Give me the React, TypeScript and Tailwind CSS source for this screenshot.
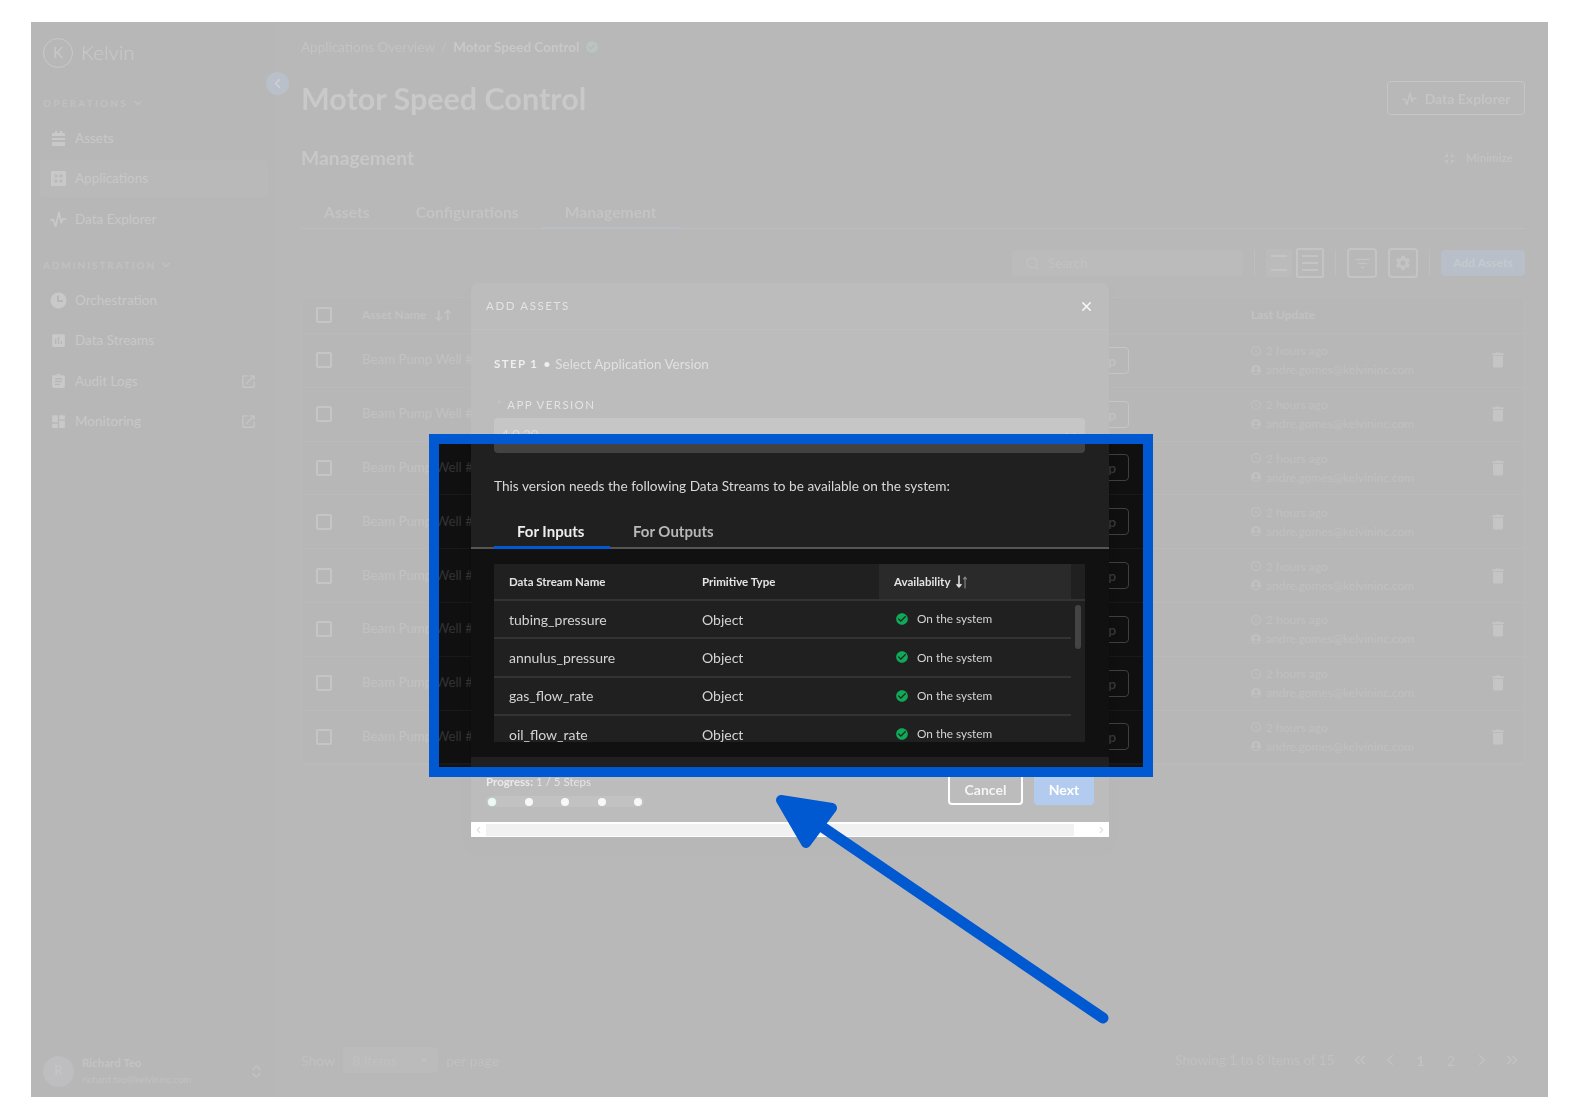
import React from "react";
import { ChevronDown, ChevronLeft, ChevronRight, ChevronsLeft, ChevronsRight, ChevronsUpDown, Search, X } from "lucide-react";
import { MdAssignment, MdCheckCircle, MdDashboard, MdDelete, MdFilterList, MdFullscreenExit, MdInsertChart, MdOpenInNew, MdSettings, MdSchedule, MdAccountCircle, MdVerified, MdArrowDropDown } from "react-icons/md";

function AssetsIcon() {
  return (
    <svg width="17" height="17" viewBox="0 0 17 17" fill="currentColor">
      <path d="M2 6V4a1 1 0 0 1 1-1h2V1h2v2h3V1h2v2h2a1 1 0 0 1 1 1v2zM2 8h13v2H2zM2 12h13v3a1 1 0 0 1-1 1H3a1 1 0 0 1-1-1z" />
    </svg>
  );
}
function AppsIcon() {
  return (
    <svg width="17" height="17" viewBox="0 0 17 17">
      <path fill="currentColor" fillRule="evenodd" d="M2 1h13a1 1 0 0 1 1 1v13a1 1 0 0 1-1 1H2a1 1 0 0 1-1-1V2a1 1 0 0 1 1-1zm2.500 3.500v3h3v-3zm5 0v3h3v-3zm-5 5v3h3v-3zm5 0v3h3v-3z" />
    </svg>
  );
}
function OrchIcon() {
  return (
    <svg width="17" height="17" viewBox="0 0 17 17">
      <path fill="currentColor" fillRule="evenodd" d="M8.500 0.500a8 8 0 1 1 0 16a8 8 0 0 1 0-16zM7 3.500V10h6V8H9V3.500z" />
    </svg>
  );
}
function PulseIcon({ size = 18 }: { size?: number }) {
  return (
    <svg width={size} height={size} viewBox="0 0 18 18" fill="none" stroke="currentColor" strokeWidth="1.800" strokeLinejoin="round" strokeLinecap="round">
      <path d="M1 10h2.500L6 16.500 9.500 2l2.500 11 1.500-4H17" />
    </svg>
  );
}
function SortIcon() {
  return (
    <svg width="14" height="14" viewBox="0 0 14 14" fill="none" strokeLinecap="round" strokeLinejoin="round">
      <path d="M4 1v11M2 9.500 4 12l2-2.500" stroke="#dedede" strokeWidth="1.600" />
      <path d="M10 13V2M8.500 4 10 2l1.500 2" stroke="#8a8a8a" strokeWidth="1.100" />
    </svg>
  );
}

const navTop = [
  { label: "Assets", icon: <AssetsIcon /> },
  { label: "Applications", icon: <AppsIcon />, active: true },
  { label: "Data Explorer", icon: <PulseIcon /> },
];
const navBottom = [
  { label: "Orchestration", icon: <OrchIcon /> },
  { label: "Data Streams", icon: <MdInsertChart size={19} /> },
  { label: "Audit Logs", icon: <MdAssignment size={19} />, ext: true },
  { label: "Monitoring", icon: <MdDashboard size={19} />, ext: true },
];

function NavItem({ item }: { item: { label: string; icon: React.ReactNode; active?: boolean; ext?: boolean } }) {
  return (
    <div className={`flex h-[37px] items-center gap-2 rounded pl-[10px] pr-[11px] text-[13.500px] text-[#474747] ${item.active ? "bg-[#161616]" : ""}`}>
      <span className="flex w-[17px] items-center justify-center text-[#4a4a4a]">{item.icon}</span>
      <span className="flex-1">{item.label}</span>
      {item.ext && <MdOpenInNew size={17} className="text-[#3d3d3d]" />}
    </div>
  );
}

function Sidebar() {
  return (
    <aside className="relative flex h-full w-[247px] shrink-0 flex-col border-r border-[#141414] bg-[#0f0f0f] px-[9px] pt-[15px]">
      <div className="ml-[3px] flex h-[31px] items-center gap-2">
        <div className="flex h-[30px] w-[30px] items-center justify-center rounded-full border border-[#4a4a4a] text-[15px] text-[#4a4a4a]">K</div>
        <span className="text-[20.500px] font-light text-[#505050]">Kelvin</span>
      </div>
      <div className="mt-[28px] ml-[3px] flex h-[14px] items-center gap-1 text-[10px] font-bold tracking-[0.22em] text-[#303030]">
        OPERATIONS <ChevronDown size={12} strokeWidth={3} />
      </div>
      <div className="mt-[9.5px] flex flex-col gap-[3.500px]">
        {navTop.map((n) => <NavItem key={n.label} item={n} />)}
      </div>
      <div className="mt-[20.5px] ml-[3px] flex h-[14px] items-center gap-1 text-[10px] font-bold tracking-[0.19em] text-[#303030]">
        ADMINISTRATION <ChevronDown size={12} strokeWidth={3} />
      </div>
      <div className="mt-[9.5px] flex flex-col gap-[3.500px]">
        {navBottom.map((n) => <NavItem key={n.label} item={n} />)}
      </div>
      <div className="mt-auto mb-[9px] ml-[3px] flex items-center gap-2">
        <div className="flex h-[31px] w-[31px] items-center justify-center rounded-full bg-[#26222c] text-[13px] font-bold text-[#3c3c3c]">R</div>
        <div className="flex-1">
          <div className="text-[11.500px] font-bold leading-[18px] text-[#383838]">Richard Teo</div>
          <div className="text-[9.500px] leading-[16px] text-[#333333]">richard.teo@kelvininc.com</div>
        </div>
        <ChevronsUpDown size={17} className="mr-[3px] text-[#333333]" />
      </div>
      <div className="absolute top-[50px] right-[-12px] flex h-[23px] w-[23px] items-center justify-center rounded-full bg-[#152c4c] text-[#4a5a70]">
        <ChevronLeft size={15} strokeWidth={3} />
      </div>
    </aside>
  );
}

function AssetRow() {
  return (
    <div className="flex h-[53.800px] items-center border-b border-[#191919] pl-[14px] pr-[16px]">
      <div className="h-[16px] w-[16px] rounded-[2px] border-2 border-[#3d3d3d]" />
      <div className="ml-[30px] w-[500px] text-[13.300px] text-[#333333]">Beam Pump Well #1</div>
      <div className="flex flex-1 justify-end pr-[121px]">
        <div className="flex h-[27px] w-[54px] items-center justify-center rounded border border-[#3f3f3f] text-[14px] font-semibold text-[#383838]">Stop</div>
      </div>
      <div className="w-[238px] text-[12px] leading-[19px] text-[#2d2d2d]">
        <div className="flex items-center gap-[4px]"><MdSchedule size={12} />2 hours ago</div>
        <div className="flex items-center gap-[4px]"><MdAccountCircle size={12} />andre.gomes@kelvininc.com</div>
      </div>
      <MdDelete size={20} className="text-[#3c3c3c]" />
    </div>
  );
}

function Main() {
  return (
    <main className="flex h-full flex-1 flex-col px-[23px] pt-[15px] pb-[24px]">
      <div className="flex h-[20px] items-center gap-[6px] text-[13.500px] text-[#3a3a3a]">
        <span>Applications Overview</span><span>/</span>
        <span className="font-bold text-[#4a4a4a]">Motor Speed Control</span>
        <MdVerified size={14} className="text-[#1a3a2c]" />
      </div>
      <div className="mt-[21px] flex h-[40px] items-center justify-between">
        <h1 className="mt-[2px] text-[30.500px] font-bold text-[#4c4c4c]">Motor Speed Control</h1>
        <div className="flex h-[34px] w-[138px] items-center justify-center gap-2 rounded border border-[#424242] text-[14px] font-bold text-[#3d3d3d]">
          <PulseIcon size={15} /> Data Explorer
        </div>
      </div>
      <div className="mt-[28px] flex h-[24px] items-center justify-between">
        <h2 className="text-[19.300px] font-bold text-[#474747]">Management</h2>
        <div className="mr-[12px] flex items-center gap-2 text-[11.500px] font-bold text-[#363636]">
          <MdFullscreenExit size={17} /> Minimize
        </div>
      </div>
      <div className="mt-[27px] flex h-[32px] border-b border-[#222222] pt-[4px] text-[15.700px] font-bold text-[#3a3a3a]">
        <span className="px-[23px]">Assets</span>
        <span className="px-[23px]">Configurations</span>
        <span className="h-[28px] border-b-2 border-[#162a48] px-[23px]">Management</span>
      </div>
      <div className="mt-[21px] flex h-[26px] items-center justify-end">
        <div className="flex h-[26px] w-[231px] items-center gap-2 rounded bg-[#1c1c1c] pl-[13px] text-[13.500px] text-[#333333]">
          <Search size={15} /> Search
        </div>
        <div className="mx-[11px] h-[26px] w-px bg-[#262626]" />
        <div className="flex items-center gap-[4px] text-[#3b3b3b]">
          <div className="flex h-[28px] w-[26px] flex-col items-center justify-between rounded-[2px] bg-[#1c1c1c] px-[5px] py-[6px]">
            <div className="h-[2px] w-full bg-current" /><div className="h-[2px] w-full bg-current" />
          </div>
          <div className="flex h-[30px] w-[28px] flex-col items-center justify-between rounded-[2px] border-2 border-[#3b3b3b] px-[4px] py-[5px]">
            <div className="h-[2px] w-full bg-current" /><div className="h-[2px] w-full bg-current" /><div className="h-[2px] w-full bg-current" />
          </div>
        </div>
        <div className="mx-[11px] h-[26px] w-px bg-[#262626]" />
        <div className="flex h-[30px] w-[30px] items-center justify-center rounded border-2 border-[#3b3b3b] text-[#3b3b3b]"><MdFilterList size={19} /></div>
        <div className="ml-[11px] flex h-[30px] w-[30px] items-center justify-center rounded border-2 border-[#3b3b3b] text-[#3b3b3b]"><MdSettings size={18} /></div>
        <div className="mx-[11px] h-[26px] w-px bg-[#262626]" />
        <div className="flex h-[26px] w-[84px] items-center justify-center rounded bg-[#152a48] text-[12px] font-bold text-[#3e4c60]">Add Assets</div>
      </div>
      <div className="mt-[21px] rounded border border-[#191919] bg-[#101010]">
        <div className="flex h-[36px] items-center border-b border-[#191919] pb-[2px] pl-[14px] text-[12px] font-bold text-[#333333]">
          <div className="h-[16px] w-[16px] rounded-[2px] border-2 border-[#3d3d3d]" />
          <span className="ml-[30px]">Asset Name</span>
          <span className="ml-2 text-[#3d3d3d]">↓↑</span>
          <span className="ml-auto w-[273px]">Last Update</span>
        </div>
        {Array.from({ length: 8 }).map((_, i) => <AssetRow key={i} />)}
      </div>
      <div className="mt-auto flex h-[26px] items-center text-[14px] text-[#303030]">
        <span>Show</span>
        <div className="mx-[8px] flex h-[26px] w-[95px] items-center justify-between rounded bg-[#1c1c1c] pl-[9px] pr-[5px]">8 items <MdArrowDropDown size={18} /></div>
        <span>per page</span>
        <span className="ml-auto text-[13.500px]">Showing 1 to 8 items of 15</span>
        <div className="ml-[16px] mr-[4px] flex items-center gap-[12.500px] text-[#363636]">
          <ChevronsLeft size={18} /><ChevronLeft size={18} />
          <span className="w-[18px] text-center font-bold">1</span>
          <span className="w-[18px] text-center">2</span>
          <ChevronRight size={18} /><ChevronsRight size={18} />
        </div>
      </div>
    </main>
  );
}

const streams = ["tubing_pressure", "annulus_pressure", "gas_flow_rate", "oil_flow_rate"];

function Modal() {
  return (
    <div className="absolute top-[261px] left-[440px] flex h-[554px] w-[638px] flex-col overflow-hidden rounded-t-lg bg-[#202020] shadow-lg">
      <div className="flex h-[47px] shrink-0 items-center justify-between border-b border-[#2b2b2b] pr-[16px] pl-[15px] text-[11.500px] tracking-[0.14em] text-[#a5a5a5]">
        ADD ASSETS
        <X size={15} strokeWidth={2.5} className="mr-[-1px] text-[#e6e6e6]" />
      </div>
      <div className="flex flex-col pr-[24px] pl-[23px]">
        <div className="mt-[24px] flex h-[20px] items-center gap-[4.500px] text-[13.500px] text-[#9c9c9c]">
          <span className="text-[11.500px] font-bold tracking-[0.12em] text-[#c8c8c8]">STEP 1</span>
          <span className="text-[#c8c8c8]">•</span>
          <span>Select Application Version</span>
        </div>
        <div className="mt-[24px] flex h-[14px] items-center gap-[4px] text-[11.500px] tracking-[0.12em] text-[#a5a5a5]">
          <span className="ml-[3px] text-[#6a3030]">*</span>APP VERSION
        </div>
        <div className="mt-[6px] flex h-[35px] items-start justify-between rounded bg-[#424242] px-[7px] pt-[7px] text-[13.500px] text-[#8a8a8a]">
          4.0.20 <ChevronDown size={15} className="mt-[3px]" />
        </div>
        <p className="mt-[23px] h-[20px] text-[13.650px] leading-[20px] text-[#d8d8d8]">This version needs the following Data Streams to be available on the system:</p>
      </div>
      <div className="mt-[17px] flex h-[36px] shrink-0 items-start border-b-2 border-[#565656] pl-[23px] text-[15px] font-bold">
        <div className="h-[36px] w-[116px] border-b-[3px] border-[#0059d0] pt-[7px] pl-[23px] text-[#ededed]">For Inputs</div>
        <div className="pt-[7px] pl-[23px] text-[#b8b8b8]">For Outputs</div>
      </div>
      <div className="flex h-[208px] shrink-0 flex-col bg-[#111111] pt-[15px] pr-[24px] pb-[15px] pl-[23px]">
        <div className="relative h-[178px] overflow-hidden bg-[#202020]">
          <div className="flex h-[37px] border-b-2 border-[#333333] pt-[1px] text-[11.500px] font-bold text-[#e4e4e4]">
            <div className="flex w-[208px] items-center pl-[15px]">Data Stream Name</div>
            <div className="flex w-[177px] items-center">Primitive Type</div>
            <div className="mt-[-1px] flex w-[192px] items-center gap-[5px] bg-[#2a2a2a] pl-[15px]">Availability <SortIcon /></div>
          </div>
          {streams.map((s) => (
            <div key={s} className="mr-[14px] flex h-[38.300px] items-center border-b-2 border-[#333333] text-[14px] text-[#d4d4d4]">
              <div className="w-[208px] pl-[15px]">{s}</div>
              <div className="w-[177px]">Object</div>
              <div className="flex items-center gap-[8px] pl-[16px] text-[11.800px]">
                <span className="relative flex h-[14px] w-[14px] items-center justify-center">
                  <MdCheckCircle size={16} className="text-[#0fa958]" />
                </span>
                On the system
              </div>
            </div>
          ))}
          <div className="absolute top-[41px] right-[4px] h-[44px] w-[6px] rounded-full bg-[#444444]" />
        </div>
      </div>
      <div className="flex h-[65px] shrink-0 justify-between pt-[16px] pr-[15px] pl-[15px]">
        <div>
          <div className="mt-[1px] text-[11.500px] leading-[16px] text-[#a8a8a8]"><b className="text-[#b8b8b8]">Progress:</b> 1 / 5 Steps</div>
          <div className="mt-[6px] flex h-[11px] w-[158px] items-center justify-between rounded-full bg-[#333333] px-[2px]">
            <span className="h-[8px] w-[8px] rounded-full bg-[#c8e8d8] ring-1 ring-[#0a6a3c]" />
            <span className="h-[8px] w-[8px] rounded-full bg-[#e8e8e8]" />
            <span className="h-[8px] w-[8px] rounded-full bg-[#e8e8e8]" />
            <span className="h-[8px] w-[8px] rounded-full bg-[#e8e8e8]" />
            <span className="h-[8px] w-[8px] rounded-full bg-[#e8e8e8]" />
          </div>
        </div>
        <div className="flex gap-[11px]">
          <div className="flex h-[32px] w-[75px] items-center justify-center rounded border-2 border-white text-[14px] font-bold text-[#dcdcdc]">Cancel</div>
          <div className="flex h-[32px] w-[60px] items-center justify-center rounded bg-[#0050c8] text-[14px] font-bold text-white">Next</div>
        </div>
      </div>
      <div className="flex h-[15px] shrink-0 items-center bg-white text-[#9a9a9a]">
        <ChevronLeft size={10} className="w-[15px]" strokeWidth={3} />
        <div className="h-[12px] flex-1 bg-[#d0d0d0]" />
        <div className="w-[20px]" />
        <ChevronRight size={10} className="w-[15px]" strokeWidth={3} />
      </div>
    </div>
  );
}

export default function App() {
  return (
    <div className="relative h-[1120px] w-[1580px] overflow-hidden bg-white pt-[22px] pl-[31px] font-[Lato,sans-serif]">
      <div className="relative h-[1075px] w-[1517px] overflow-hidden bg-[#111111]">
        <div className="flex h-full w-full blur-[0.5px]">
          <Sidebar />
          <Main />
          <Modal />
        </div>
        <div className="absolute top-[412px] left-[398px] h-[343px] w-[724px] border-[10px] border-[#0059d0] shadow-[0_0_0_2000px_rgba(255,255,255,0.7)]" />
      </div>
      <svg className="absolute top-0 left-0" width="1580" height="1120" viewBox="0 0 1580 1120" fill="none">
        <path d="M815 822 1103 1018" stroke="#0059d0" strokeWidth="11" strokeLinecap="round" />
        <path d="M781 800 832 808 806 843Z" fill="#0059d0" stroke="#0059d0" strokeWidth="10" strokeLinejoin="round" />
      </svg>
    </div>
  );
}
